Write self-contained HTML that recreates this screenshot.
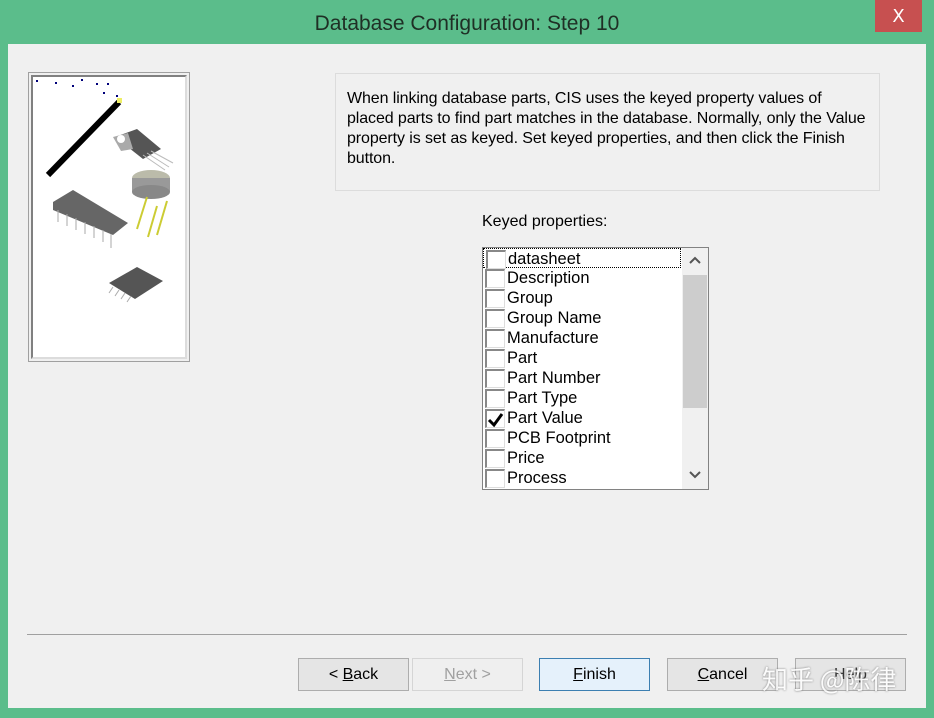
<!DOCTYPE html>
<html><head><style>
*{margin:0;padding:0;box-sizing:border-box}
body{width:934px;height:718px;background:#5bbd8b;position:relative;overflow:hidden;font-family:"Liberation Sans",Arial,sans-serif;color:#000}
.abs{position:absolute}
#title{left:0;top:0;width:934px;height:44px;text-align:center;font-size:21px;line-height:48px;color:#1f2f25;font-family:"Liberation Sans",sans-serif;letter-spacing:0px}
#close{left:875px;top:0;width:47px;height:32px;background:#c75050;color:#fff;font-size:18px;text-align:center;line-height:34px;font-family:"DejaVu Sans",sans-serif}
#client{left:8px;top:44px;width:918px;height:664px;background:#f0f0f0}
#pic{left:28px;top:72px;width:162px;height:290px;border:1px solid #a0a0a0;background:#f0f0f0}
#picin{left:2px;top:2px;width:156px;height:284px;border:2px solid #808080;border-right-color:#dcdcdc;border-bottom-color:#dcdcdc;background:#fff}
#desc{left:335px;top:73px;width:545px;height:118px;border:1px solid #dcdcdc;font-size:16px;line-height:20px;padding:15px 9px 15px 11px;letter-spacing:-0.1px}
#kp{left:482px;top:213px;font-size:16px}
#list{left:482px;top:247px;width:227px;height:243px;border:1px solid #828282;background:#fff;overflow:hidden}
.row{position:absolute;left:0;height:20px;width:200px;font-size:16.5px;line-height:20px}
.cb{position:absolute;left:2px;top:1px;width:20px;height:19px;border:1px solid #ddd;border-top:2px solid #888;border-left:2px solid #888;background:#fff}
.row span{position:absolute;left:24px;top:0}
#sb{left:199px;top:0;width:26px;height:241px;background:#f0f0f0}
#thumb{left:200px;top:27px;width:24px;height:133px;background:#cdcdcd}
.btn{position:absolute;top:658px;width:111px;height:33px;border:1px solid #adadad;background:#e5e5e5;font-size:16px;text-align:center;line-height:31px}
#sep{left:27px;top:634px;width:880px;height:1px;background:#a0a0a0}
</style></head><body>
<div id="title" class="abs">Database Configuration: Step 10</div>
<div id="close" class="abs">X</div>
<div id="client" class="abs"></div>
<div id="pic" class="abs"><div id="picin" class="abs">
<svg width="152" height="280" style="position:absolute;left:0;top:0">
<g fill="#00007a"><rect x="3" y="3" width="2" height="2"/><rect x="22" y="5" width="2" height="2"/><rect x="39" y="8" width="2" height="2"/><rect x="48" y="2" width="2" height="2"/><rect x="63" y="6" width="2" height="2"/><rect x="74" y="6" width="2" height="2"/><rect x="70" y="15" width="2" height="2"/><rect x="83" y="18" width="2" height="2"/></g>
<line x1="15" y1="98" x2="86" y2="25" stroke="#000" stroke-width="6"/>
<rect x="84" y="21" width="5" height="5" fill="#ee6"/>
<polygon points="82,60 104,52 128,72 110,82" fill="#555"/><polygon points="80,60 95,56 100,72 88,74" fill="#aaa"/><circle cx="88" cy="62" r="4" fill="#fff"/>
<g stroke="#bbb"><line x1="118" y1="74" x2="140" y2="86"/><line x1="114" y1="76" x2="136" y2="90"/><line x1="110" y1="78" x2="132" y2="93"/></g>
<ellipse cx="118" cy="101" rx="19" ry="8" fill="#bba"/><rect x="99" y="101" width="38" height="14" fill="#999"/><ellipse cx="118" cy="115" rx="19" ry="7" fill="#888"/>
<g stroke="#cc3" stroke-width="2"><line x1="114" y1="120" x2="104" y2="152"/><line x1="124" y1="129" x2="115" y2="160"/><line x1="134" y1="124" x2="124" y2="158"/></g>
<polygon points="20,125 40,113 95,146 80,158 20,133" fill="#666"/>
<g stroke="#aaa"><line x1="25" y1="133" x2="25" y2="145"/><line x1="34" y1="137" x2="34" y2="149"/><line x1="43" y1="141" x2="43" y2="153"/><line x1="52" y1="145" x2="52" y2="157"/><line x1="61" y1="149" x2="61" y2="161"/><line x1="70" y1="153" x2="70" y2="165"/><line x1="78" y1="157" x2="78" y2="171"/></g>
<polygon points="76,206 104,190 130,204 102,222" fill="#555"/>
<g stroke="#aaa"><line x1="80" y1="210" x2="76" y2="216"/><line x1="86" y1="213" x2="82" y2="219"/><line x1="92" y1="216" x2="88" y2="222"/><line x1="98" y1="219" x2="94" y2="225"/></g>
</svg></div></div>
<div id="desc" class="abs">When linking database parts, CIS uses the keyed property values of placed parts to find part matches in the database. Normally, only the Value property is set as keyed. Set keyed properties, and then click the Finish button.</div>
<div id="kp" class="abs">Keyed properties:</div>
<div id="list" class="abs">
<div class="row" style="top:0;border:1px dotted #000;width:198px"><div class="cb"></div><span>datasheet</span></div>
<div class="row" style="top:20px"><div class="cb"></div><span>Description</span></div>
<div class="row" style="top:40px"><div class="cb"></div><span>Group</span></div>
<div class="row" style="top:60px"><div class="cb"></div><span>Group Name</span></div>
<div class="row" style="top:80px"><div class="cb"></div><span>Manufacture</span></div>
<div class="row" style="top:100px"><div class="cb"></div><span>Part</span></div>
<div class="row" style="top:120px"><div class="cb"></div><span>Part Number</span></div>
<div class="row" style="top:140px"><div class="cb"></div><span>Part Type</span></div>
<div class="row" style="top:160px"><div class="cb"><svg width="17" height="17" style="position:absolute;left:0;top:0"><path d="M2 9 L7 14 L15 3" stroke="#000" stroke-width="3" fill="none"/></svg></div><span>Part Value</span></div>
<div class="row" style="top:180px"><div class="cb"></div><span>PCB Footprint</span></div>
<div class="row" style="top:200px"><div class="cb"></div><span>Price</span></div>
<div class="row" style="top:220px"><div class="cb"></div><span>Process</span></div>
<div id="sb" class="abs"></div><div id="thumb" class="abs"></div>
<svg class="abs" style="left:205px;top:8px" width="14" height="10"><path d="M2 7 L7 2 L12 7" stroke="#555" stroke-width="2" fill="none"/></svg>
<svg class="abs" style="left:205px;top:222px" width="14" height="10"><path d="M2 2 L7 7 L12 2" stroke="#555" stroke-width="2" fill="none"/></svg>
</div>
<div id="sep" class="abs"></div>
<div class="btn" style="left:298px">&lt; <u>B</u>ack</div>
<div class="btn" style="left:412px;color:#a0a0a0;border-color:#d5d5d5;background:#efefef"><u>N</u>ext &gt;</div>
<div class="btn" style="left:539px;border-color:#3c7fb1;background:#e5f1fb"><u>F</u>inish</div>
<div class="btn" style="left:667px"><u>C</u>ancel</div>
<div class="btn" style="left:795px;color:#333">Help</div>
<div class="abs" style="left:762px;top:660px;font-size:26px;color:#fff;font-family:'Noto Sans CJK SC',sans-serif;text-shadow:0 0 2px #666;opacity:.85">知乎 @陈律</div>
</body></html>
